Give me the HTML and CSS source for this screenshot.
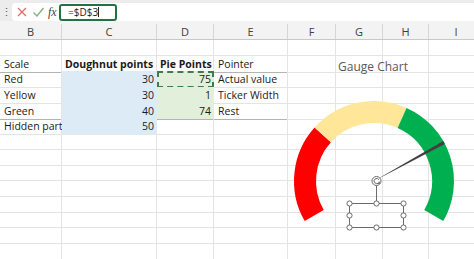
FILE: index.html
```html
<html>
  <head>
    <title>Gauge Chart</title>
    <meta content="text/html;charset=utf-8" http-equiv="Content-Type">
    <link rel="stylesheet" href="styles.css">
  </head>
  <body>
    <div class="formula-bar">
      <span class="grip">&#8942;</span>
      <div class="bar-inner">
        <svg class="tool" width="12" height="12" viewBox="0 0 12 12">
          <path d="M2 2 L10 10 M10 2 L2 10" stroke="#e26a6a" stroke-width="1.3" fill="none"/>
        </svg>
        <svg class="tool" width="13" height="12" viewBox="0 0 13 12">
          <path d="M1.5 6.5 L5 10 L11.5 2" stroke="#7fb07f" stroke-width="1.3" fill="none"/>
        </svg>
        <span class="fx">fx</span>
        <div class="formula-input">=$D$3<span class="caret"></span></div>
      </div>
    </div>

    <div class="sheet">
      <div class="col-head">
        <div>B</div><div>C</div><div>D</div><div>E</div><div>F</div><div>G</div><div>H</div><div>I</div>
      </div>

      <div class="row"><div></div><div></div><div></div><div></div><div></div><div></div><div></div><div></div></div>
      <div class="row">
        <div class="cell rule">Scale</div>
        <div class="cell rule bold">Doughnut points</div>
        <div class="cell rule bold">Pie Points</div>
        <div class="cell rule">Pointer</div>
        <div></div><div></div><div></div><div></div>
      </div>
      <div class="row">
        <div class="cell">Red</div>
        <div class="cell num blue">30</div>
        <div class="cell num green copy">75</div>
        <div class="cell">Actual value</div>
        <div></div><div></div><div></div><div></div>
      </div>
      <div class="row">
        <div class="cell">Yellow</div>
        <div class="cell num blue">30</div>
        <div class="cell num green">1</div>
        <div class="cell">Ticker Width</div>
        <div></div><div></div><div></div><div></div>
      </div>
      <div class="row">
        <div class="cell rule">Green</div>
        <div class="cell num blue rule">40</div>
        <div class="cell num green rule">74</div>
        <div class="cell rule">Rest</div>
        <div></div><div></div><div></div><div></div>
      </div>
      <div class="row">
        <div class="cell">Hidden part</div>
        <div class="cell num blue">50</div>
        <div></div><div></div><div></div><div></div><div></div><div></div>
      </div>
      <div class="row"><div></div><div></div><div></div><div></div><div></div><div></div><div></div><div></div></div>
      <div class="row"><div></div><div></div><div></div><div></div><div></div><div></div><div></div><div></div></div>
      <div class="row"><div></div><div></div><div></div><div></div><div></div><div></div><div></div><div></div></div>
      <div class="row"><div></div><div></div><div></div><div></div><div></div><div></div><div></div><div></div></div>
      <div class="row"><div></div><div></div><div></div><div></div><div></div><div></div><div></div><div></div></div>
      <div class="row"><div></div><div></div><div></div><div></div><div></div><div></div><div></div><div></div></div>
      <div class="row"><div></div><div></div><div></div><div></div><div></div><div></div><div></div><div></div></div>
      <div class="row"><div></div><div></div><div></div><div></div><div></div><div></div><div></div><div></div></div>

      <!-- chart floats over the grid -->
      <svg class="chart" width="186" height="219" viewBox="0 0 186 219">
        <text x="85" y="31" class="chart-title" text-anchor="middle">Gauge Chart</text>
        <g fill="none" stroke-width="22">
          <path d="M26.24 175.5 A69 69 0 0 1 34.73 94.83" stroke="#ff0000"/>
          <path d="M34.73 94.83 A69 69 0 0 1 114.06 77.97" stroke="#ffe699"/>
          <path d="M114.06 77.97 A69 69 0 0 1 145.76 175.5" stroke="#00b050"/>
        </g>
        <polygon points="86,141 155.3,101 156.9,103.9" fill="#404040"/>
        <g stroke="#6b6b6b" stroke-width="1" fill="#fff">
          <line x1="88.5" y1="145.5" x2="88.5" y2="163"/>
          <rect x="61.5" y="163.5" width="54" height="24" fill="none"/>
          <circle cx="88.5" cy="141" r="4.5"/>
          <path d="M90.8 142.6 A2.6 2.6 0 1 1 91 139.8" fill="none"/>
          <path d="M89.6 143.6 L91.6 143.4 L91.2 141.5" fill="none"/>
          <circle cx="61.5" cy="163.5" r="2.6"/>
          <circle cx="88.5" cy="163.5" r="2.6"/>
          <circle cx="115.5" cy="163.5" r="2.6"/>
          <circle cx="61.5" cy="175.5" r="2.6"/>
          <circle cx="115.5" cy="175.5" r="2.6"/>
          <circle cx="61.5" cy="187.5" r="2.6"/>
          <circle cx="88.5" cy="187.5" r="2.6"/>
          <circle cx="115.5" cy="187.5" r="2.6"/>
        </g>
      </svg>
    </div>
  </body>
</html>
```

FILE: styles.css
```css
body {
  margin: 0;
  background: #fff;
  font-family: "Open Sans", "Liberation Sans", sans-serif;
  color: #1a1a1a;
  overflow: hidden;
}
.formula-bar {
  display: flex;
  height: 21px;
  padding-top: 3px;
  box-sizing: border-box;
  background: #ececec;
}
.grip {
  width: 12px;
  font-size: 11px;
  line-height: 18px;
  color: #555;
  text-align: center;
}
.bar-inner {
  flex: 1;
  display: flex;
  align-items: center;
  background: #fff;
  border-radius: 4px 0 0 4px;
  height: 18px;
  padding-left: 4px;
}
.tool {
  margin-right: 4px;
}
.fx {
  font-family: "Liberation Serif", serif;
  font-style: italic;
  font-size: 12px;
  color: #444;
  width: 10px;
  margin-left: -1px;
}
.formula-input {
  align-self: flex-end;
  margin-left: 1px;
  width: 58px;
  height: 17px;
  box-sizing: border-box;
  border: 2px solid #217346;
  border-radius: 3px;
  font-size: 10px;
  line-height: 13px;
  padding-left: 7px;
  color: #222;
}
.caret {
  display: inline-block;
  width: 1px;
  height: 10px;
  background: #222;
  vertical-align: -1px;
}

.sheet {
  position: relative;
}
.col-head, .row {
  display: grid;
  grid-template-columns: 62px 95px 57px 74px 48px 47px 46px 55px;
}
.col-head {
  height: 19px;
  background: #f3f3f3;
  border-bottom: 1px solid #c8c8c8;
  box-sizing: border-box;
}
.col-head div {
  font-size: 11px;
  text-align: center;
  color: #404040;
  border-right: 1px solid #d6d6d6;
  margin: 3px 0 0;
  line-height: 15px;
}
.row {
  height: 15.7px;
}
.row > div {
  border-right: 1px solid #e4e4e4;
  border-bottom: 1px solid #e4e4e4;
  box-sizing: border-box;
  white-space: nowrap;
  overflow: visible;
}
.cell {
  font-size: 10.5px;
  line-height: 16px;
  padding: 0 3px 0 4px;
}
.bold {
  font-weight: bold;
  padding-left: 3px;
}
.num {
  text-align: right;
  padding-right: 2px;
}
.row > .blue {
  background: #ddebf7;
  border-color: #ddebf7;
}
.row > .green {
  background: #e2efda;
  border-color: #e2efda;
}
.row > .rule {
  border-bottom-color: #b4b4b4;
}
.copy {
  outline: 2px dashed #3b7d4f;
  outline-offset: -2px;
}

.chart {
  position: absolute;
  left: 288px;
  top: 19px;
}
.chart-title {
  font-family: "Open Sans", sans-serif;
  font-size: 12px;
  fill: #595959;
}
```
